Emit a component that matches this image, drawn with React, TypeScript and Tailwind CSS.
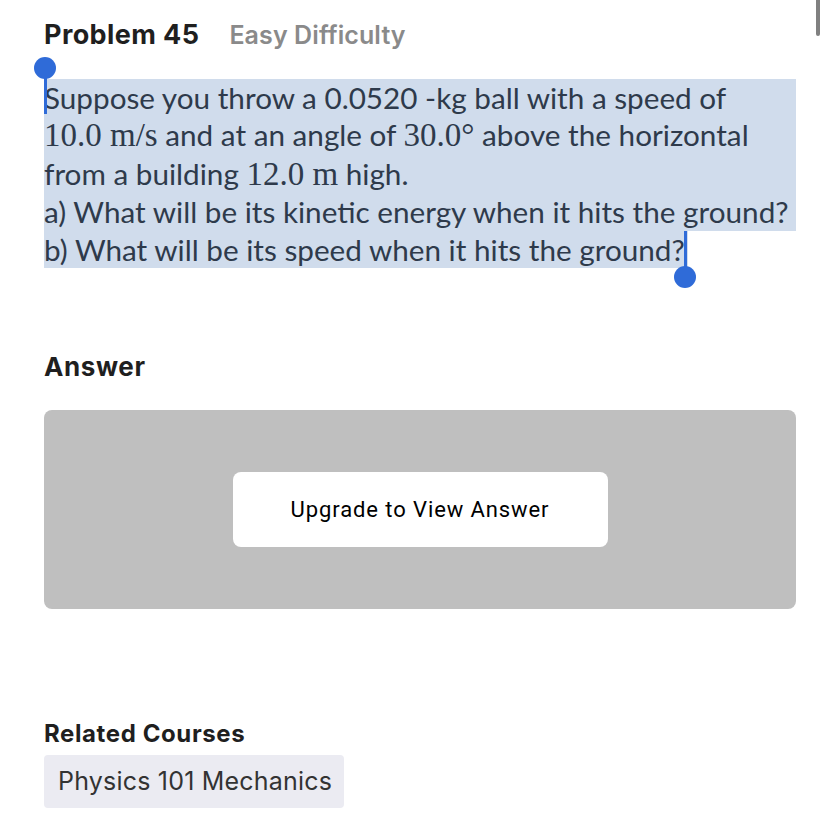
import React from 'react'

const body = { fontFamily: 'Lato, "Open Sans", sans-serif' }
const head = { fontFamily: 'Inter, "Liberation Sans", sans-serif' }
const math = { fontFamily: '"Liberation Serif", "DejaVu Serif", serif' }

function M({ children }: { children: React.ReactNode }) {
  return (
    <span className="text-[33px]" style={math}>
      {children}
    </span>
  )
}

export default function App() {
  return (
    <div className="relative min-h-[829px] w-[828px] bg-white">
      <div className="absolute right-[8px] top-0 h-[36px] w-[4px] rounded-b bg-[#808080]" />

      <div className="pl-[44px] pr-[32px] pt-[21px]">
        <div className="flex items-baseline gap-[30px] leading-none" style={head}>
          <h1 className="text-[27px] font-bold tracking-[0.4px] text-[#1f1f1f]">Problem 45</h1>
          <span className="text-[25px] font-semibold tracking-[0.1px] text-[#8a8a8a]">Easy Difficulty</span>
        </div>

        <div className="relative mt-[31px] text-[29.7px] leading-[37.4px] text-[#2e3a4b]" style={body}>
          <div className="bg-[#d0dcec]">
            <div className="whitespace-nowrap">Suppose you throw a 0.0520 -kg ball with a speed of</div>
            <div className="whitespace-nowrap">
              <M>10.0 m/s</M> and at an angle of <M>30.0°</M> above the horizontal
            </div>
            <div className="whitespace-nowrap">
              from a building <M>12.0 m</M> high.
            </div>
            <div className="whitespace-nowrap">a) What will be its kinetic energy when it hits the ground?</div>
          </div>
          <div className="inline-block whitespace-nowrap bg-[#d0dcec] pr-[3px] align-top">
            b) What will be its speed when it hits the ground?
            <span className="relative inline-block h-0 w-0 align-top">
              <span className="absolute left-[-1px] top-0 h-[40px] w-[3px] bg-[#2f6bd8]" />
              <span className="absolute left-[-11px] top-[35px] h-[22px] w-[22px] rounded-full bg-[#2f6bd8]" />
            </span>
          </div>

          {/* start handle */}
          <span className="absolute left-0 top-[-11px] h-[46px] w-[3px] bg-[#2f6bd8]" />
          <span className="absolute left-[-10px] top-[-22px] h-[22px] w-[22px] rounded-full bg-[#2f6bd8]" />
        </div>

        <h2 className="mt-[86px] text-[26px] font-bold leading-none tracking-[0.6px] text-[#1f1f1f]" style={head}>
          Answer
        </h2>

        <div className="mt-[30px] flex h-[199px] items-center justify-center rounded-[8px] bg-[#bfbfbf]">
          <button
            className="h-[75px] w-[375px] rounded-[8px] bg-white text-[22px] tracking-[0.9px] text-black"
            style={{ fontFamily: 'Roboto, "Liberation Sans", sans-serif' }}
          >
            Upgrade to View Answer
          </button>
        </div>

        <h2
          className="mt-[113px] text-[24px] font-bold leading-none tracking-[0.6px] text-[#1f1f1f]"
          style={head}
        >
          Related Courses
        </h2>
        <div
          className="mt-[9px] inline-block rounded-[4px] bg-[#ebebf2] pl-[14px] pr-[12px] py-[9px] text-[25px] leading-[35px] tracking-[0.2px] text-[#333333]"
          style={head}
        >
          Physics 101 Mechanics
        </div>
      </div>
    </div>
  )
}
